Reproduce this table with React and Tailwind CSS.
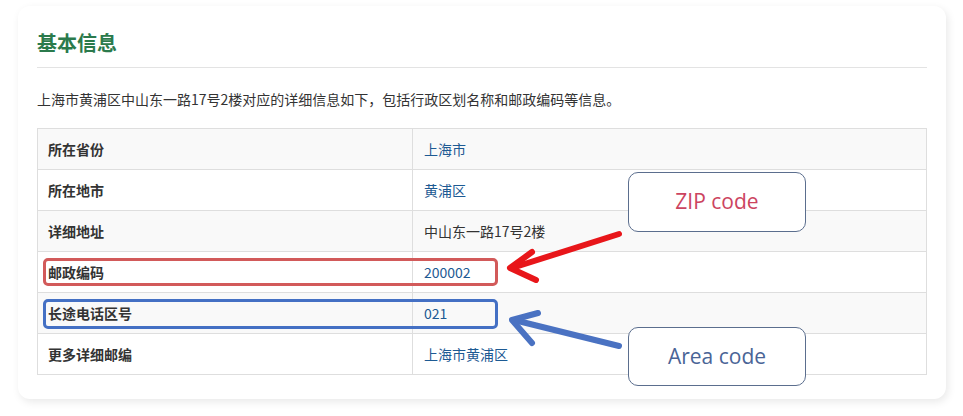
const rows = [
  { label: "所在省份", value: "上海市", link: true },
  { label: "所在地市", value: "黄浦区", link: true },
  { label: "详细地址", value: "中山东一路17号2楼", link: false },
  { label: "邮政编码", value: "200002", link: true },
  { label: "长途电话区号", value: "021", link: true },
  { label: "更多详细邮编", value: "上海市黄浦区", link: true },
];

function Arrows() {
  return (
    <svg className="absolute left-0 top-0 pointer-events-none" width="963" height="416">
      {/* red arrow to the zip code */}
      <g stroke="#e8161a" strokeWidth="6" strokeLinecap="round" strokeLinejoin="round" fill="none">
        <line x1="619" y1="234" x2="512" y2="268" />
        <polyline points="532,252 510,268 536,280" />
      </g>
      {/* blue arrow to the area code */}
      <g stroke="#4a72c2" strokeWidth="6" strokeLinecap="round" strokeLinejoin="round" fill="none">
        <line x1="619" y1="346" x2="514" y2="320" />
        <polyline points="538,313 512,320 532,343" />
      </g>
    </svg>
  );
}

export default function App() {
  return (
    <div
      className="relative w-[963px] h-[416px] bg-white overflow-hidden pt-[6px] pl-[18px]"
      style={{ fontFamily: '"Noto Sans CJK SC", "Noto Sans", sans-serif' }}
    >
      <div className="w-[928px] h-[393px] bg-white rounded-xl shadow-[2px_3px_8px_rgba(0,0,0,0.09)] px-[19px] pt-[23px]">
        <h2 className="text-[20px] leading-[28px] font-bold text-[#2b7a4c] pb-[10px] border-b border-[#e3e3e3]">
          基本信息
        </h2>
        <p className="mt-[19px] text-[14px] leading-[24px] text-[#333]">
          上海市黄浦区中山东一路17号2楼对应的详细信息如下，包括行政区划名称和邮政编码等信息。
        </p>
        <table className="mt-[17px] w-[890px] border-collapse text-[14px]">
          <tbody>
            {rows.map((r, i) => (
              <tr key={r.label} className={i % 2 === 0 ? "bg-[#f9f9f9]" : "bg-white"}>
                <td className="w-[375px] h-[41px] border border-[#dedede] px-[10px] font-bold text-[#333]">
                  {r.label}
                </td>
                <td
                  className={`h-[41px] border border-[#dedede] px-[11px] ${
                    r.link ? "text-[#1d5a93]" : "text-[#333]"
                  }`}
                >
                  {r.value}
                </td>
              </tr>
            ))}
          </tbody>
        </table>
      </div>

      {/* highlight frames */}
      <div className="absolute left-[43px] top-[258px] w-[455px] h-[28px] rounded-[5px] border-[3px] border-[#d25a5a]" />
      <div className="absolute left-[43px] top-[299px] w-[455px] h-[30px] rounded-[5px] border-[3px] border-[#4470c4]" />

      <Arrows />

      {/* callouts */}
      <div
        className="absolute left-[628px] top-[172px] w-[178px] h-[60px] rounded-[10px] border-[1.5px] border-[#5b6e8e] bg-white flex items-center justify-center text-[21px] text-[#cc4460]"
        style={{ fontFamily: '"Open Sans", sans-serif' }}
      >
        ZIP code
      </div>
      <div
        className="absolute left-[628px] top-[327px] w-[178px] h-[59px] rounded-[10px] border-[1.5px] border-[#5b6e8e] bg-white flex items-center justify-center text-[21px] text-[#4a6496]"
        style={{ fontFamily: '"Open Sans", sans-serif' }}
      >
        Area code
      </div>
    </div>
  );
}
